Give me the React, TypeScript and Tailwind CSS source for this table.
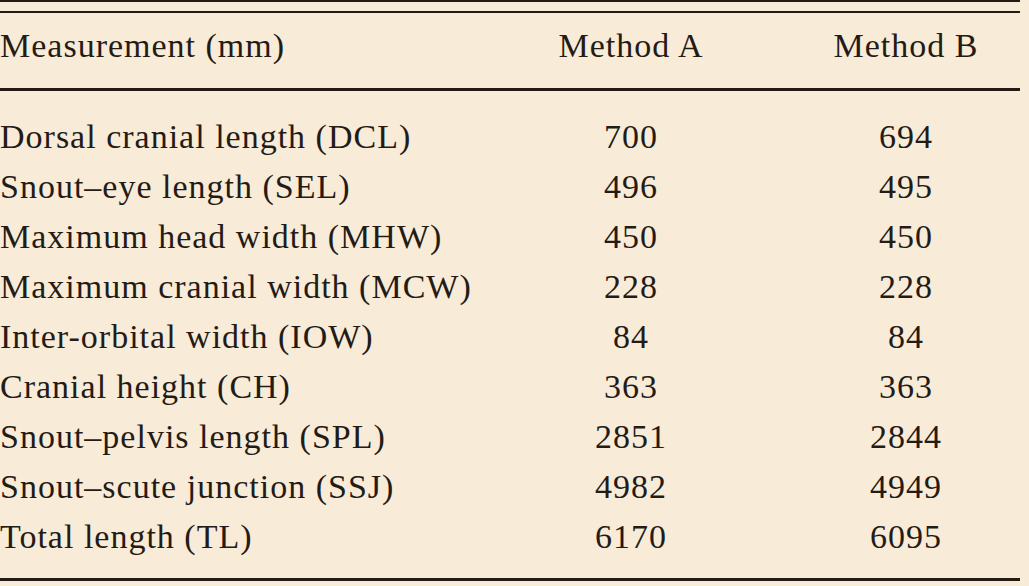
const rows: [string, string, string][] = [
  ["Dorsal cranial length (DCL)", "700", "694"],
  ["Snout–eye length (SEL)", "496", "495"],
  ["Maximum head width (MHW)", "450", "450"],
  ["Maximum cranial width (MCW)", "228", "228"],
  ["Inter-orbital width (IOW)", "84", "84"],
  ["Cranial height (CH)", "363", "363"],
  ["Snout–pelvis length (SPL)", "2851", "2844"],
  ["Snout–scute junction (SSJ)", "4982", "4949"],
  ["Total length (TL)", "6170", "6095"],
]

export default function App() {
  return (
    <div className="w-[1029px] h-[586px] bg-[#f8ebd7] text-[#241b16] font-['Liberation_Serif',serif] text-[34px] tracking-[1px] overflow-hidden">
      <div className="w-[1020px]">
        {/* double top rule */}
        <div className="h-[2px] bg-[#231a14]" />
        <div className="h-[9px]" />
        <div className="h-[2px] bg-[#231a14]" />

        {/* header */}
        <div className="grid grid-cols-[517px_228px_275px] pt-[8px] pb-[17px] leading-[50px]">
          <div>Measurement (mm)</div>
          <div className="text-center">Method A</div>
          <div className="text-center pl-[47px]">Method B</div>
        </div>
        <div className="h-[3px] bg-[#231a14]" />

        {/* body */}
        <div className="pt-[21px] pb-[16px]">
          {rows.map(([label, a, b]) => (
            <div key={label} className="grid grid-cols-[517px_228px_275px] leading-[50px]">
              <div className="whitespace-nowrap">{label}</div>
              <div className="text-center">{a}</div>
              <div className="text-center pl-[47px]">{b}</div>
            </div>
          ))}
        </div>
        <div className="h-[3px] bg-[#231a14]" />
      </div>
    </div>
  )
}
